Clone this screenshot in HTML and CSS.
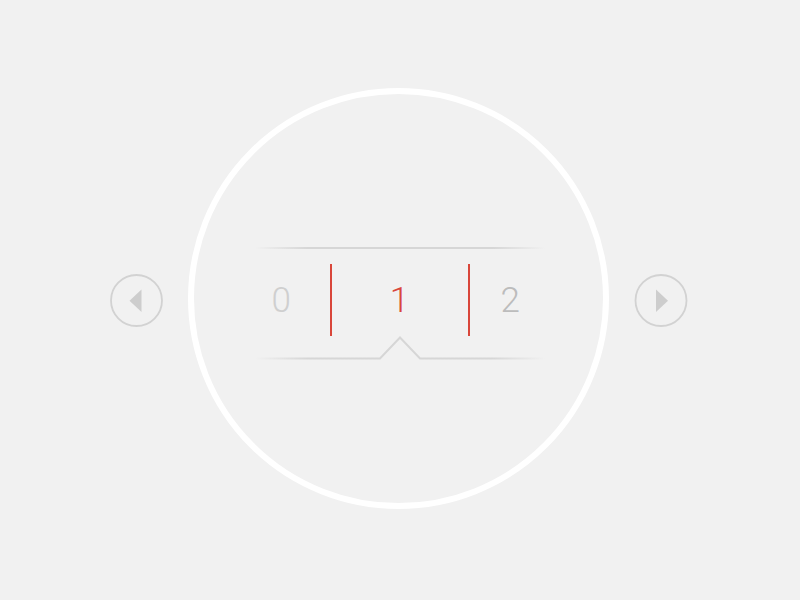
FILE: index.html
```html
<!DOCTYPE html>
<html lang="en">
  <head>
    <meta charset="UTF-8" />
    <title>Picker</title>
    <link rel="stylesheet" href="styles.css">
  </head>
  <body>
    <div class="stage">
      <button class="arrow arrow-prev" aria-label="Previous">
        <svg width="53" height="53" viewBox="0 0 53 53">
          <circle cx="26.5" cy="26.5" r="25.5" fill="none" stroke="#d2d2d2" stroke-width="1.8" />
          <polygon points="31.5,15.5 31.5,38 19.5,26.75" fill="#cdcdcd" />
        </svg>
      </button>

      <div class="dial">
        <div class="picker">
          <div class="rule-top"></div>
          <div class="numbers">
            <span class="num num-prev">0</span>
            <span class="mark"></span>
            <span class="num num-current">1</span>
            <span class="mark"></span>
            <span class="num num-next">2</span>
          </div>
          <svg class="rule-bottom" width="290" height="24" viewBox="0 0 290 24">
            <defs>
              <linearGradient id="fade" x1="0" x2="1" y1="0" y2="0">
                <stop offset="0" stop-color="#d6d6d6" stop-opacity="0" />
                <stop offset="0.18" stop-color="#d6d6d6" />
                <stop offset="0.82" stop-color="#d6d6d6" />
                <stop offset="1" stop-color="#d6d6d6" stop-opacity="0" />
              </linearGradient>
            </defs>
            <polyline points="0,22.5 125,22.5 145,1.5 165,22.5 290,22.5" fill="none" stroke="url(#fade)" stroke-width="2" />
          </svg>
        </div>
      </div>

      <button class="arrow arrow-next" aria-label="Next">
        <svg width="54" height="53" viewBox="0 0 54 53">
          <circle cx="27" cy="26.5" r="25.5" fill="none" stroke="#d2d2d2" stroke-width="1.8" />
          <polygon points="22,15.5 22,38 34,26.75" fill="#cdcdcd" />
        </svg>
      </button>
    </div>
  </body>
</html>
```

FILE: styles.css
```css
body {
  margin: 0;
  padding: 0;
  background-color: #f1f1f1;
  font-family: Roboto, "Liberation Sans", sans-serif;
}

.stage {
  height: 600px;
  display: flex;
  align-items: center;
  gap: 25px;
  padding-left: 110px;
}

.arrow {
  padding: 0;
  border: none;
  background: none;
  display: flex;
  cursor: pointer;
}

.dial {
  width: 421px;
  height: 421px;
  box-sizing: border-box;
  border: 6px solid #fff;
  border-radius: 50%;
  display: flex;
  align-items: center;
  justify-content: center;
  margin-top: -3px;
}

.picker {
  width: 290px;
  margin-left: 2px;
  margin-top: 10px;
}

.rule-top {
  height: 2px;
  background: linear-gradient(to right, rgba(214, 214, 214, 0), #d6d6d6 18%, #d6d6d6 82%, rgba(214, 214, 214, 0));
}

.numbers {
  display: grid;
  grid-template-columns: 75px 2px 136px 2px 75px;
  height: 70px;
  margin-top: 15px;
  font-size: 35px;
  font-weight: 300;
  line-height: 70px;
}

.mark {
  background-color: #d9463a;
}

.num {
  padding-top: 2px;
}

.num-prev {
  padding-left: 17px;
  color: #cfcfcf;
}

.num-current {
  text-align: center;
  color: #d9463a;
}

.num-next {
  padding-left: 31px;
  color: #bcbcbc;
}

.rule-bottom {
  display: block;
  margin-top: 2px;
}
```
